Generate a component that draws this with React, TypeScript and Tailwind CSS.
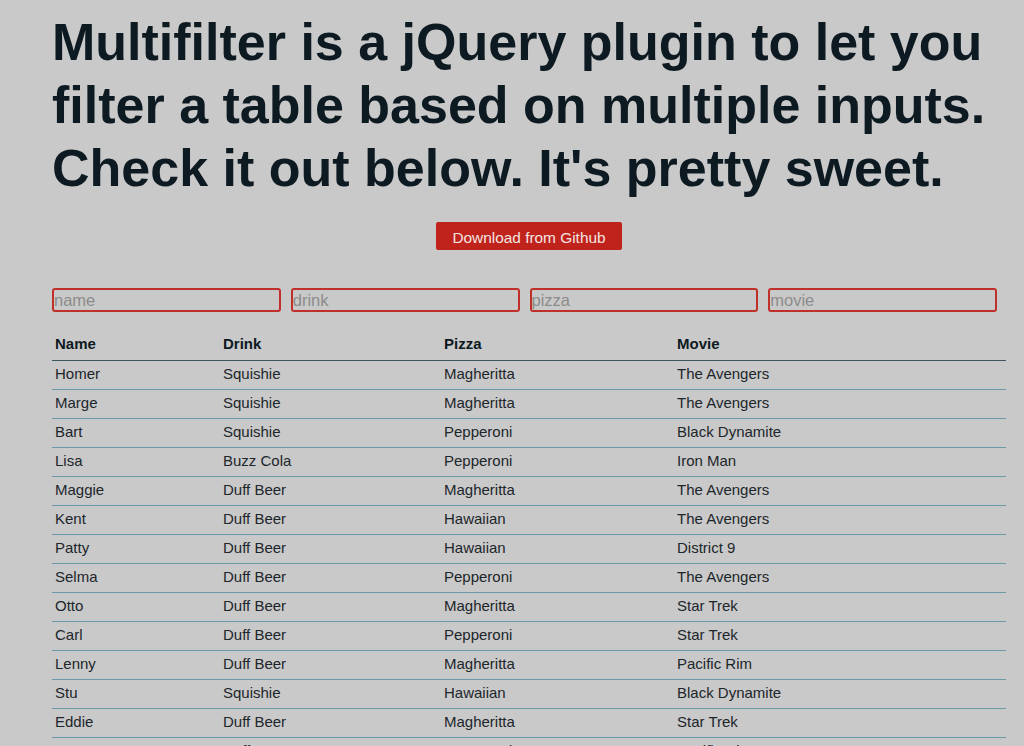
const rows: [string, string, string, string][] = [
  ['Homer', 'Squishie', 'Magheritta', 'The Avengers'],
  ['Marge', 'Squishie', 'Magheritta', 'The Avengers'],
  ['Bart', 'Squishie', 'Pepperoni', 'Black Dynamite'],
  ['Lisa', 'Buzz Cola', 'Pepperoni', 'Iron Man'],
  ['Maggie', 'Duff Beer', 'Magheritta', 'The Avengers'],
  ['Kent', 'Duff Beer', 'Hawaiian', 'The Avengers'],
  ['Patty', 'Duff Beer', 'Hawaiian', 'District 9'],
  ['Selma', 'Duff Beer', 'Pepperoni', 'The Avengers'],
  ['Otto', 'Duff Beer', 'Magheritta', 'Star Trek'],
  ['Carl', 'Duff Beer', 'Pepperoni', 'Star Trek'],
  ['Lenny', 'Duff Beer', 'Magheritta', 'Pacific Rim'],
  ['Stu', 'Squishie', 'Hawaiian', 'Black Dynamite'],
  ['Eddie', 'Duff Beer', 'Magheritta', 'Star Trek'],
  ['Lou', 'Duff Beer', 'Pepperoni', 'Pacific Rim'],
  ['Moe', 'Duff Beer', 'Hawaiian', 'District 9'],
];

const filters = ['name', 'drink', 'pizza', 'movie'];

export default function App() {
  return (
    <div className="h-[746px] overflow-hidden bg-[#c9c9c9] pl-[52px] pr-[18px] pt-[11px] font-['Liberation_Sans',Arial,sans-serif] text-[#0d1a22]">
      {/* headline */}
      <h1 className="text-[52px] font-bold leading-[63px]">
        Multifilter is a jQuery plugin to let you filter a table based on multiple inputs. Check it out below. It's pretty sweet.
      </h1>

      <div className="mt-[22px] flex justify-center">
        <button
          type="button"
          className="h-[28px] w-[186px] rounded-[2px] bg-[#c0231b] pt-[3px] text-[15.4px] leading-none text-[#f3e3e1]"
        >
          Download from Github
        </button>
      </div>

      {/* filter inputs */}
      <div className="mt-[38px] flex w-[945px] gap-[10px]">
        {filters.map((f) => (
          <input
            key={f}
            placeholder={f}
            className="h-[24px] flex-1 rounded-[3px] border-2 border-[#c0302a] bg-transparent px-0 text-[16.5px] outline-none placeholder:text-[#8c8c8c]"
          />
        ))}
      </div>

      {/* table */}
      <table className="mt-[21px] w-[954px] border-collapse text-left text-[15px]">
        <thead>
          <tr className="border-b-[1.5px] border-[#3e5661]">
            <th className="w-[168px] px-[3px] pb-[4px] font-bold">Name</th>
            <th className="w-[221px] px-[3px] pb-[4px] font-bold">Drink</th>
            <th className="w-[233px] px-[3px] pb-[4px] font-bold">Pizza</th>
            <th className="px-[3px] pb-[4px] font-bold">Movie</th>
          </tr>
        </thead>
        <tbody>
          {rows.map((r) => (
            <tr key={r[0]} className="h-[29px] border-b-[1.5px] border-[#6a99a8] text-[#1c262b]">
              {r.map((c, i) => (
                <td key={i} className="px-[3px]">
                  {c}
                </td>
              ))}
            </tr>
          ))}
        </tbody>
      </table>
    </div>
  );
}
